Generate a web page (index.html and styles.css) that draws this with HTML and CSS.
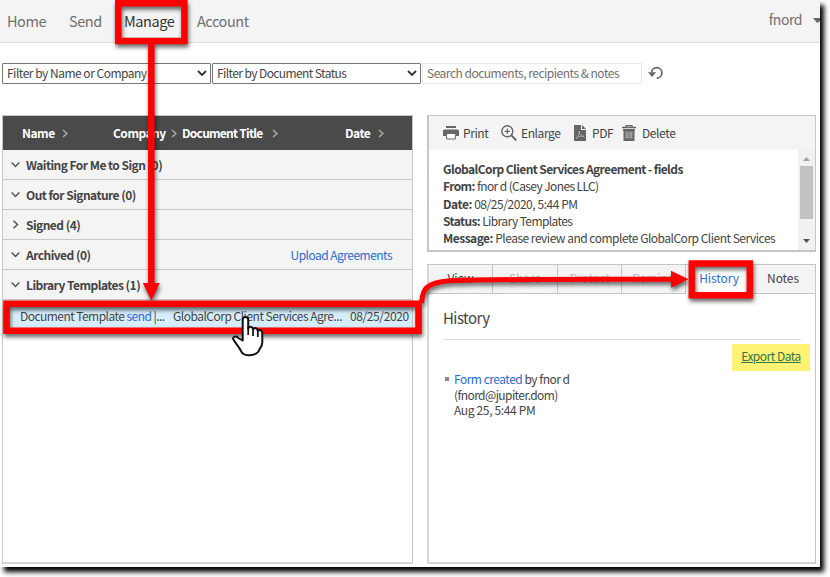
FILE: index.html
```html
<!DOCTYPE html>
<html lang="en">
<head>
<meta charset="utf-8">
<title>Manage</title>
<link rel="stylesheet" href="styles.css">
</head>
<body>
<div class="window">
  <nav class="nav">
    <a class="nav-home">Home</a><a class="nav-send">Send</a><a class="nav-manage">Manage</a><a class="nav-account">Account</a>
    <span class="user">fnord</span><i class="caret"></i>
  </nav>
  <div class="filters">
    <div class="select"><span class="f-name">Filter by Name or Company</span><svg width="10" height="7" viewBox="0 0 10 7"><path d="M1 1l4 4 4-4"/></svg></div>
    <div class="select"><span class="f-status">Filter by Document Status</span><svg width="10" height="7" viewBox="0 0 10 7"><path d="M1 1l4 4 4-4"/></svg></div>
    <div class="search">Search documents, recipients &amp; notes</div>
    <svg class="refresh" width="16" height="14" viewBox="0 0 16 14"><path d="M3.5 6.5a5.2 5.2 0 1 1 5.2 5.6" fill="none" stroke="#666" stroke-width="1.7"/><path d="M0 6.3h8.2L4 11z" fill="#666"/></svg>
  </div>
  <main class="columns">
    <section class="documents">
      <header class="table-head">
        <b class="h-name">Name</b><svg class="sort" viewBox="0 0 6 9"><path d="M1 1l4 3.5L1 8"/></svg>
        <b class="h-company">Company</b><svg class="sort" viewBox="0 0 6 9"><path d="M1 1l4 3.5L1 8"/></svg>
        <b class="h-title">Document Title</b><svg class="sort" viewBox="0 0 6 9"><path d="M1 1l4 3.5L1 8"/></svg>
        <b class="h-date">Date</b><svg class="sort" viewBox="0 0 6 9"><path d="M1 1l4 3.5L1 8"/></svg>
      </header>
      <div class="group"><svg viewBox="0 0 9 9"><path d="M.7 2.5l3.8 4 3.8-4"/></svg><b>Waiting For Me to Sign (0)</b></div>
      <div class="group"><svg viewBox="0 0 9 9"><path d="M.7 2.5l3.8 4 3.8-4"/></svg><b>Out for Signature (0)</b></div>
      <div class="group"><svg viewBox="0 0 9 9"><path d="M2.5.7l4 3.8-4 3.8"/></svg><b>Signed (4)</b></div>
      <div class="group"><svg viewBox="0 0 9 9"><path d="M.7 2.5l3.8 4 3.8-4"/></svg><b>Archived (0)</b><a class="upload">Upload Agreements</a></div>
      <div class="group"><svg viewBox="0 0 9 9"><path d="M.7 2.5l3.8 4 3.8-4"/></svg><b>Library Templates (1)</b></div>
      <div class="document"><span class="d-name">Document Template <a>send</a> |...</span><span class="d-title">GlobalCorp Client Services Agre...</span><span class="d-date">08/25/2020</span></div>
    </section>
    <div class="side">
      <section class="detail">
        <div class="toolbar">
          <svg width="16" height="14" viewBox="0 0 16 14"><path d="M3 0h10v2H3zM1.500 3.500h13q1.500 0 1.500 1.500v5h-3V8H3v2H0V5q0-1.500 1.500-1.500z" fill="#666"/><path d="M3.600 8v5h8.800V8" fill="#fff" stroke="#666"/></svg><span class="t-print">Print</span>
          <svg width="16" height="16" viewBox="0 0 16 16" fill="none" stroke="#666"><circle cx="6.300" cy="6.300" r="5.500" stroke-width="1.400"/><path d="M3.500 6.300h5.600M6.300 3.500v5.600" stroke-width="1.200"/><path d="M10.400 10.400l4.800 4.800" stroke-width="2"/></svg><span class="t-enlarge">Enlarge</span>
          <svg width="12" height="16" viewBox="0 0 12 16"><path d="M0 0h7v5h5v11H0zM8 0l4 4H8z" fill="#666"/><path d="M5 6c1.500 0 .5 3-2.500 7.500C1.500 14 3 11 9.500 11c1 0 .5 1-1 .5C6 10 4.500 8 5 6z" fill="none" stroke="#bbb" stroke-width=".7"/></svg><span class="t-pdf">PDF</span>
          <svg width="14" height="16" viewBox="0 0 14 16"><path d="M4 2V.6h6V2M0 2.500h14M1.700 5h10.600" fill="none" stroke="#666" stroke-width="1.300"/><path d="M1 4h12v1.500h-.5V16h-11V5.500H1z" fill="#666"/><path d="M4.200 6.500v7M6 6.500v7M8 6.500v7M9.800 6.500v7" stroke="#bbb"/></svg><span class="t-delete">Delete</span>
        </div>
        <div class="summary">
          <div class="fields">
            <p class="m1"><b>GlobalCorp Client Services Agreement - fields</b></p>
            <p class="m2"><b>From:</b> fnor d (Casey Jones LLC)</p>
            <p class="m3"><b>Date:</b> 08/25/2020, 5:44 PM</p>
            <p class="m4"><b>Status:</b> Library Templates</p>
            <p class="m5"><b>Message:</b> Please review and complete GlobalCorp Client Services</p>
          </div>
          <div class="scrollbar"><i class="up"></i><i class="thumb"></i><i class="down"></i></div>
        </div>
      </section>
      <section class="activity">
        <div class="tabs"><span>View</span><span class="off">Share</span><span class="off">Protect</span><span class="off">Remind</span><span class="active">History</span><span>Notes</span></div>
        <div class="history">
          <h2>History</h2>
          <div class="export"><a>Export Data</a></div>
          <div class="event"><p class="e1"><a>Form created</a> by fnor d</p><p class="e2">(fnord@jupiter.dom)</p><p class="e3">Aug 25, 5:44 PM</p></div>
        </div>
      </section>
    </div>
  </main>
</div>
<svg class="annotations" width="830" height="577" viewBox="0 0 830 577">
  <g class="marks">
    <path d="M118.200 3.200h66.200v37.800h-66.200z"/>
    <path d="M151.300 44v241"/>
    <path class="head" d="M142.800 283h17l-8.500 17.500z"/>
    <path d="M6.500 303.800h412v27H6.500z"/>
    <path class="wire" d="M421.500 303C423 293 421 283 450 280.800C480 279 530 279.300 674 279.300"/>
    <path class="head" d="M671 270.800v17l17.500-8.500z"/>
    <path d="M691.800 263.500h58v31.800h-58z"/>
  </g>
  <path class="hand" d="M242.700 340.500V319.500C242.700 316 248.200 316 248.200 319.500V328.500C249.500 325.800 253 326.500 253 329.500C254.500 327 257.800 328 257.800 331C259.500 329 262.300 330.500 262.300 333.500V342.500C262.300 347 259 348.500 258.500 351.500C254.500 356.500 244.500 356.500 241.500 352C239.500 347 234.500 342 233.200 339.200C232.500 336.500 236.500 335.500 238.200 338z"/>
  <path class="fingers" d="M248.200 327v8M253 329v7M257.800 331v6"/>
</svg>
</body>
</html>
```
FILE: styles.css
```css
* { box-sizing: border-box; }
body { margin: 0; width: 830px; height: 577px; overflow: hidden; background: #fff; color: #444; font: 12px/18px "Noto Sans CJK SC", "Open Sans", sans-serif; letter-spacing: -.5px; white-space: nowrap; }
p, h2 { margin: 0; }
a { color: #2a6cc9; }
svg { flex: none; }
.window { width: 820px; height: 567px; background: #fff; box-shadow: 4px 5px 5px #000; }

.nav { display: flex; height: 43px; padding: 10px 0 0 7px; background: #f4f4f4; border-bottom: 1px solid #dedede; font-size: 14.500px; line-height: 21px; letter-spacing: -.45px; }
.nav a { color: #707070; }
.nav .nav-manage { color: #333; }
.nav-home { width: 62px; }
.nav-send { width: 55px; }
.nav-manage { width: 73px; }
.user { margin: -1px 11px 0 auto; color: #707070; font-size: 14px; }
.caret { width: 7px; height: 5px; margin-top: 8px; background: #666; clip-path: polygon(0 0, 100% 0, 100% 60%, 60% 100%); }

.filters { display: flex; height: 72px; padding: 20px 0 0 2px; }
.select { display: flex; align-items: center; justify-content: space-between; width: 209px; height: 21px; margin-right: 1px; padding: 0 3px 1px 4px; border: 1px solid #777; border-radius: 1px; }
.select svg { fill: none; stroke: #333; stroke-width: 1.800; }
.f-status { letter-spacing: -.6px; }
.search { width: 220px; height: 21px; padding: 0 4px; border: 1px solid #e8e8e8; color: #707070; }
.refresh { margin: 3px 0 0 6px; }

.columns { display: flex; gap: 14px; padding-left: 2px; }
.documents { width: 411px; height: 449px; border: 1px solid #c6c6c6; border-bottom: 2px solid #d6d6d6; }
.table-head { display: flex; align-items: center; height: 34px; padding-left: 19px; background: #4a4a4a; color: #fff; }
.sort { width: 6px; height: 9px; fill: none; stroke: #aaa; stroke-width: 1.500; }
.h-name { width: 40px; }
.h-company { width: 58px; margin-left: 45px; }
.h-title { width: 90px; margin-left: 5px; letter-spacing: -.75px; }
.h-date { width: 33px; margin-left: 67px; }
.group { display: flex; align-items: center; height: 30px; padding: 0 20px 0 8px; background: #f4f4f4; border-bottom: 1px solid #c8c8c8; letter-spacing: -.53px; }
.group svg { width: 9px; height: 9px; margin-right: 6px; fill: none; stroke: #555; stroke-width: 1.500; }
.upload { margin-left: auto; }
.document { display: flex; height: 33px; padding: 7px 0 0 17px; background: #d5edfc; }
.d-name { width: 153px; letter-spacing: -.55px; }
.d-title { width: 177px; }
.d-date { letter-spacing: -.4px; }

.side { width: 389px; }
.detail { height: 137px; border: 1px solid #c6c6c6; border-bottom-width: 2px; border-left-width: 2px; }
.toolbar { display: flex; align-items: center; height: 34px; padding-left: 14px; background: #f4f4f4; letter-spacing: -.4px; }
.toolbar span { margin-left: 4px; }
.t-print { width: 38px; }
.t-enlarge { width: 53px; }
.t-pdf { width: 29px; }
.toolbar .t-pdf, .toolbar .t-delete { margin-left: 6px; }
.toolbar .t-pdf { width: 30px; }
.summary { display: flex; justify-content: space-between; height: 100px; }
.fields { padding: 10px 0 0 14px; line-height: 17.300px; }
.m1, .m2, .m4 { letter-spacing: -.6px; }
.m3 { letter-spacing: -.45px; }
.scrollbar { display: flex; flex-direction: column; align-items: center; width: 17px; background: #f1f1f1; }
.up { width: 7px; height: 4px; margin: 7px 0 5px; background: #a3a3a3; clip-path: polygon(50% 0, 100% 100%, 0 100%); }
.thumb { width: 13px; height: 53px; background: #c1c1c1; }
.down { width: 7px; height: 4px; margin-top: 20px; background: #505050; clip-path: polygon(0 0, 100% 0, 50% 100%); }

.activity { height: 300px; margin-top: 12px; border: 1px solid #c6c6c6; border-left: 2px solid #d6d6d6; border-bottom: 2px solid #d6d6d6; }
.tabs { display: grid; grid-template-columns: 64px 65px 64px 64px 67px 1fr; height: 29px; text-align: center; line-height: 25px; letter-spacing: -.1px; }
.tabs span { background: #f4f4f4; border-right: 1px solid #c6c6c6; border-bottom: 1px solid #c6c6c6; }
.tabs span:last-child { border-right: 0; padding-right: 2px; }
.tabs .off { color: #bbb; }
.tabs .active { background: #fff; color: #2a6cc9; border-bottom: 0; }
.history { padding: 13px 14px 0; }
h2 { height: 33px; border-bottom: 1px solid #dedede; font: 15px/22px "Noto Sans CJK SC", "Open Sans", sans-serif; letter-spacing: -.55px; }
.export { width: 78px; height: 27px; margin: 4px -9px 0 auto; padding-top: 3px; background: #fff373; text-align: center; }
.export a { color: #35744a; text-decoration: underline; text-underline-offset: 1px; }
.event { position: relative; padding-left: 11px; line-height: 15.500px; }
.event::before { content: ""; position: absolute; left: 2px; top: 6px; width: 4px; height: 4px; background: #888; }
.e2 { letter-spacing: -.6px; }
.e3 { letter-spacing: -.35px; }
.annotations { position: absolute; left: 0; top: 0; }
.marks { fill: none; stroke: #f00; stroke-width: 6.500; filter: drop-shadow(1px 3px 2px rgba(0,0,0,.6)); }
.marks .head { fill: #f00; stroke: none; }
.marks .wire { stroke-width: 5; }
.hand { fill: #fff; stroke: #111; stroke-width: 2; stroke-linejoin: round; }
.fingers { fill: none; stroke: #111; stroke-width: 1.700; }
```
